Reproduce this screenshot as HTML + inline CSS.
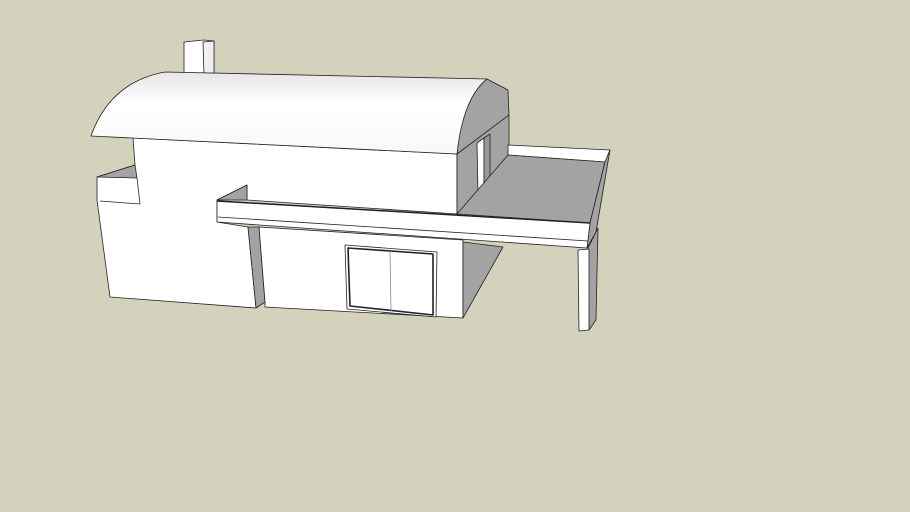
<!DOCTYPE html>
<html><head><meta charset="utf-8"><style>
html,body{margin:0;padding:0;background:#d4d2bc;}
svg{display:block}
</style></head><body>
<svg width="910" height="512" viewBox="0 0 910 512" xmlns="http://www.w3.org/2000/svg">
<defs>
<linearGradient id="rg" x1="0" y1="0" x2="0" y2="1">
<stop offset="0" stop-color="#e6e6e6"/><stop offset="0.4" stop-color="#ffffff"/><stop offset="1" stop-color="#f8f8f8"/>
</linearGradient>
</defs>
<rect width="910" height="512" fill="#d4d2bc"/>
<g stroke="#222" stroke-width="0.8" stroke-linejoin="round">
<!-- chimney -->
<polygon points="184,42 204,40 214,41 214,76 184,77" fill="#fff"/>
<polygon points="203,42 214,41 214,76 204,76" fill="#f0f0f0"/>
<!-- body -->
<polygon points="97,177 135,165 133,138 457,154 457,214 247,200 247,185 217,200 217,222 248,227 256,308 110,297 97,200" fill="#fff"/>
<!-- left balcony -->
<polygon points="97,177 135,165 137,178" fill="#a3a3a3"/>
<line x1="100" y1="201" x2="140" y2="204"/>
<line x1="137" y1="178" x2="140" y2="204"/>
<!-- pillar -->
<polygon points="248,227 259,227 265,302 256,308" fill="#a3a3a3"/>
<!-- lower wall -->
<polygon points="259,227 463,240 463,318 265,307 265,302" fill="#fff"/>
<polygon points="463,242 503,247 463,318" fill="#a3a3a3"/>
<!-- door -->
<polygon points="345,245 437,252 436,317 347,309" fill="#fff" stroke-width="0.8"/>
<polygon points="348,248 433,254 433,315 350,306" fill="#fff" stroke-width="1.6"/>
<line x1="390" y1="251" x2="391" y2="311" stroke="#888"/>
<!-- end wall gray -->
<polygon points="457,154 463,98 487,79 508,90 509,115 509,158 457,214" fill="#a3a3a3"/>
<line x1="457" y1="154" x2="509" y2="115"/>
<!-- window -->
<polygon points="477,143 484,138 484,188 478,193" fill="#fff"/>
<polygon points="484,138 490,134 490,184 484,188" fill="#999"/>
<!-- deck -->
<polygon points="508,145 610,150 605,162 508,155" fill="#fff"/>
<polygon points="457,214 508,155 605,162 590,223" fill="#a3a3a3"/>
<polygon points="610,150 605,162 590,223 587,248 596,232" fill="#a3a3a3"/>
<!-- post -->
<polygon points="588,248 598,228 596,320 589,330" fill="#a3a3a3"/>
<polygon points="578,250 589,249 589,330 579,331" fill="#fff"/>
<!-- band -->
<polygon points="217,200 247,185 247,200" fill="#a3a3a3"/>
<polygon points="217,201 590,223 587,248 217,222" fill="#fff"/>
<line x1="218" y1="217" x2="588" y2="241"/>
<line x1="217" y1="201" x2="590" y2="223" stroke-width="1.5"/>
<!-- roof -->
<path d="M91,136 Q110,82 165,72 L487,79 Q463,98 457,154 Z" fill="url(#rg)"/>
</g>
</svg>
</body></html>
